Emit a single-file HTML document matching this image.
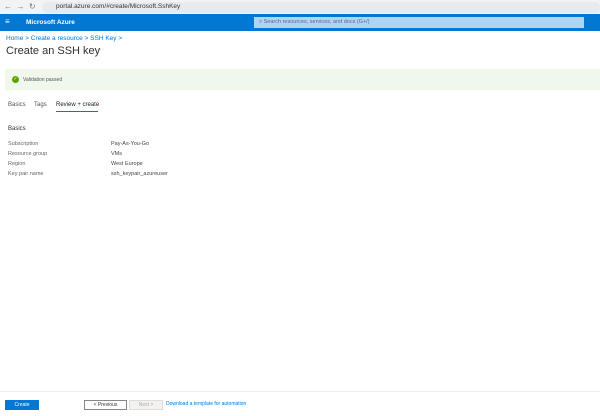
<!DOCTYPE html>
<html><head><meta charset="utf-8"><style>
*{margin:0;padding:0;box-sizing:border-box}
body{width:600px;height:416px;background:#fff;font-family:"Liberation Sans",sans-serif;position:relative;overflow:hidden;color:#323130}
.a{position:absolute;white-space:nowrap}
</style></head><body>
<div class="a" style="left:0;top:0;width:600px;height:14px;background:#f1f3f4"></div>
<div class="a" style="left:4px;top:2px;font-size:8px;color:#777">←&nbsp;&nbsp;→&nbsp;&nbsp;↻</div>
<div class="a" style="left:42px;top:2px;width:558px;height:11px;background:#e8eaed;border-radius:6px"></div>
<div class="a" style="left:56px;top:3px;font-size:6.5px;color:#333">portal.azure.com/#create/Microsoft.SshKey</div>
<div class="a" style="left:0;top:14px;width:600px;height:17px;background:#0078d4"></div>
<div class="a" style="left:5px;top:17px;font-size:8px;color:#fff">≡</div>
<div class="a" style="left:26px;top:19px;font-size:6.5px;color:#fff;font-weight:bold">Microsoft Azure</div>
<div class="a" style="left:254px;top:17px;width:330px;height:11px;background:#b0d5f3"></div>
<div class="a" style="left:259px;top:19px;font-size:5.5px;color:#4a6c8c">⌕ Search resources, services, and docs (G+/)</div>
<div class="a" style="left:6px;top:35px;font-size:6.5px;color:#0078d4">Home &gt; Create a resource &gt; SSH Key &gt;</div>
<div class="a" style="left:6px;top:45px;font-size:11px;color:#323130">Create an SSH key</div>
<div class="a" style="left:97px;top:46px;font-size:7px;color:#999">···</div>
<div class="a" style="left:5px;top:69px;width:595px;height:21px;background:#f0f8ec"></div>
<div class="a" style="left:12px;top:76px;width:7px;height:7px;border-radius:50%;background:#57a300;color:#fff;font-size:5px;text-align:center;line-height:7px">✓</div>
<div class="a" style="left:23px;top:77px;font-size:5px;color:#555">Validation passed</div>
<div class="a" style="left:8px;top:102px;font-size:6px;color:#555">Basics</div>
<div class="a" style="left:34px;top:102px;font-size:6px;color:#555">Tags</div>
<div class="a" style="left:56px;top:102px;font-size:6px;color:#222">Review + create</div>
<div class="a" style="left:56px;top:111px;width:42px;height:1px;background:#0078d4"></div>
<div class="a" style="left:8px;top:126px;font-size:6px;color:#323130">Basics</div>
<div class="a" style="left:8px;top:139px;font-size:5.5px;color:#666;line-height:10px">Subscription<br>Resource group<br>Region<br>Key pair name</div>
<div class="a" style="left:111px;top:139px;font-size:5.5px;color:#444;line-height:10px">Pay-As-You-Go<br>VMs<br>West Europe<br>ssh_keypair_azureuser</div>
<div class="a" style="left:0;top:391px;width:600px;height:1px;background:#eee"></div>
<div class="a" style="left:5px;top:400px;width:34px;height:10px;background:#0078d4;color:#fff;font-size:5px;text-align:center;line-height:10px">Create</div>
<div class="a" style="left:84px;top:400px;width:43px;height:10px;border:1px solid #8a8886;font-size:5px;text-align:center;line-height:8px;color:#333">&lt; Previous</div>
<div class="a" style="left:129px;top:400px;width:34px;height:10px;background:#f3f2f1;border:1px solid #ddd;font-size:5px;text-align:center;line-height:8px;color:#aaa">Next &gt;</div>
<div class="a" style="left:166px;top:401px;font-size:5px;color:#0078d4">Download a template for automation</div>
</body></html>
